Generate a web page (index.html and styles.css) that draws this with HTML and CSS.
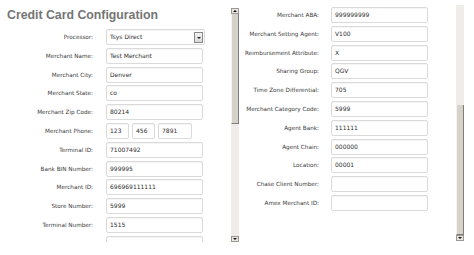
FILE: index.html
```html
<!DOCTYPE html>
<html lang="en">
<head>
    <meta charset="UTF-8">
    <title>Credit Card Configuration</title>
    <link rel="stylesheet" href="styles.css">
</head>
<body>
    <div class="screens">
        <!-- Top of the form -->
        <div class="pane pane-left">
            <div class="pane-body">
                <h1 class="title">Credit Card Configuration</h1>
                <div class="form form-left">
                    <label>Processor:</label>
                    <div class="select">
                        <span>Tsys Direct</span>
                        <span class="select-btn"></span>
                    </div>
                    <label>Merchant Name:</label>
                    <div class="field">Test Merchant</div>
                    <label>Merchant City:</label>
                    <div class="field">Denver</div>
                    <label>Merchant State:</label>
                    <div class="field">co</div>
                    <label>Merchant Zip Code:</label>
                    <div class="field">80214</div>
                    <label>Merchant Phone:</label>
                    <div class="phone">
                        <div class="field field-sm">123</div>
                        <div class="field field-sm">456</div>
                        <div class="field field-md">7891</div>
                    </div>
                    <label>Terminal ID:</label>
                    <div class="field">71007492</div>
                    <label>Bank BIN Number:</label>
                    <div class="field">999995</div>
                    <label>Merchant ID:</label>
                    <div class="field">696969111111</div>
                    <label>Store Number:</label>
                    <div class="field">5999</div>
                    <label>Terminal Number:</label>
                    <div class="field">1515</div>
                    <label></label>
                    <div class="field"></div>
                </div>
            </div>
            <div class="scrollbar sb-left">
                <div class="sb-btn up"></div>
                <div class="sb-thumb thumb-top"></div>
                <div class="sb-track"></div>
                <div class="sb-btn down"></div>
            </div>
        </div>

        <!-- Bottom of the form -->
        <div class="pane pane-right">
            <div class="pane-body">
                <div class="form form-right">
                    <label>Merchant ABA:</label>
                    <div class="field">999999999</div>
                    <label>Merchant Setting Agent:</label>
                    <div class="field">V100</div>
                    <label>Reimbursement Attribute:</label>
                    <div class="field">X</div>
                    <label>Sharing Group:</label>
                    <div class="field">QGV</div>
                    <label>Time Zone Differential:</label>
                    <div class="field">705</div>
                    <label>Merchant Category Code:</label>
                    <div class="field">5999</div>
                    <label>Agent Bank:</label>
                    <div class="field">111111</div>
                    <label>Agent Chain:</label>
                    <div class="field">000000</div>
                    <label>Location:</label>
                    <div class="field">00001</div>
                    <label>Chase Client Number:</label>
                    <div class="field"></div>
                    <label>Amex Merchant ID:</label>
                    <div class="field"></div>
                </div>
            </div>
            <div class="scrollbar sb-right">
                <div class="sb-track"></div>
                <div class="sb-thumb thumb-bottom"></div>
                <div class="sb-btn down"></div>
            </div>
        </div>
    </div>
</body>
</html>
```

FILE: styles.css
```css
* {
    box-sizing: border-box;
    margin: 0;
    padding: 0;
}

body {
    background: #fff;
    font-family: "DejaVu Sans", Verdana, sans-serif;
    color: #333;
}

.screens {
    display: flex;
    width: 474px;
    height: 255px;
}

.pane {
    display: flex;
    height: 242px;
    overflow: hidden;
}

.pane-left {
    width: 240px;
}

.pane-right {
    width: 234px;
}

.pane-body {
    flex: 1;
    overflow: hidden;
}

.title {
    font-family: "Liberation Sans", Arial, sans-serif;
    font-size: 12.3px;
    font-weight: bold;
    color: #757575;
    line-height: 16px;
    padding: 7px 0 0 7px;
    height: 29px;
}

.form {
    display: grid;
    row-gap: 2.8px;
    align-items: center;
}

.form-left {
    grid-template-columns: 93px 99px;
    column-gap: 13px;
}

.form-right {
    grid-template-columns: 79px 97px;
    column-gap: 12px;
    padding-top: 7px;
}

.form label {
    font-size: 5.7px;
    text-align: right;
    white-space: nowrap;
    color: #3a3a3a;
}

.field,
.select {
    height: 16px;
    width: 97px;
    border: 1px solid #dadada;
    border-radius: 2px;
    box-shadow: inset 0 1px 1px rgba(0,0,0,0.04);
    background: #fff;
    font-size: 6px;
    line-height: 14px;
    padding-left: 3px;
    color: #2e2e2e;
    white-space: nowrap;
}

.select {
    width: 99px;
    display: flex;
    justify-content: space-between;
    align-items: center;
    padding-right: 1px;
}

.select-btn {
    width: 9px;
    height: 11px;
    border: 1px solid #888;
    background: linear-gradient(#f4f4f4, #d8d8d8);
    position: relative;
}

.select-btn::after {
    content: "";
    position: absolute;
    left: 2px;
    top: 4px;
    border-left: 2px solid transparent;
    border-right: 2px solid transparent;
    border-top: 2px solid #222;
}

.phone {
    display: flex;
    gap: 3px;
}

.field-sm {
    width: 23px;
}

.field-md {
    width: 34px;
}

/* fake classic scrollbars */
.scrollbar {
    width: 8px;
    display: flex;
    flex-direction: column;
}

.sb-left {
    margin: 8px 1px 0 0;
}

.sb-right {
    margin: 5px 10px 0 0;
    height: 236px;
}

.sb-track {
    flex: 1;
    background: #eeedea;
}

.sb-thumb {
    background: #d6d2ca;
    border-left: 1px solid #f4f3f0;
    border-right: 1px solid #7e7d7a;
    border-bottom: 1px solid #7e7d7a;
}

.thumb-top {
    height: 110px;
}

.thumb-bottom {
    height: 130px;
}

.sb-btn {
    height: 6px;
    background: #e8e6e1;
    border: 1px solid #9a9893;
    position: relative;
}

.sb-btn::after {
    content: "";
    position: absolute;
    left: 1px;
    border-left: 2px solid transparent;
    border-right: 2px solid transparent;
}

.sb-btn.up::after {
    top: 1px;
    border-bottom: 2px solid #111;
}

.sb-btn.down::after {
    top: 1px;
    border-top: 2px solid #111;
}
```
